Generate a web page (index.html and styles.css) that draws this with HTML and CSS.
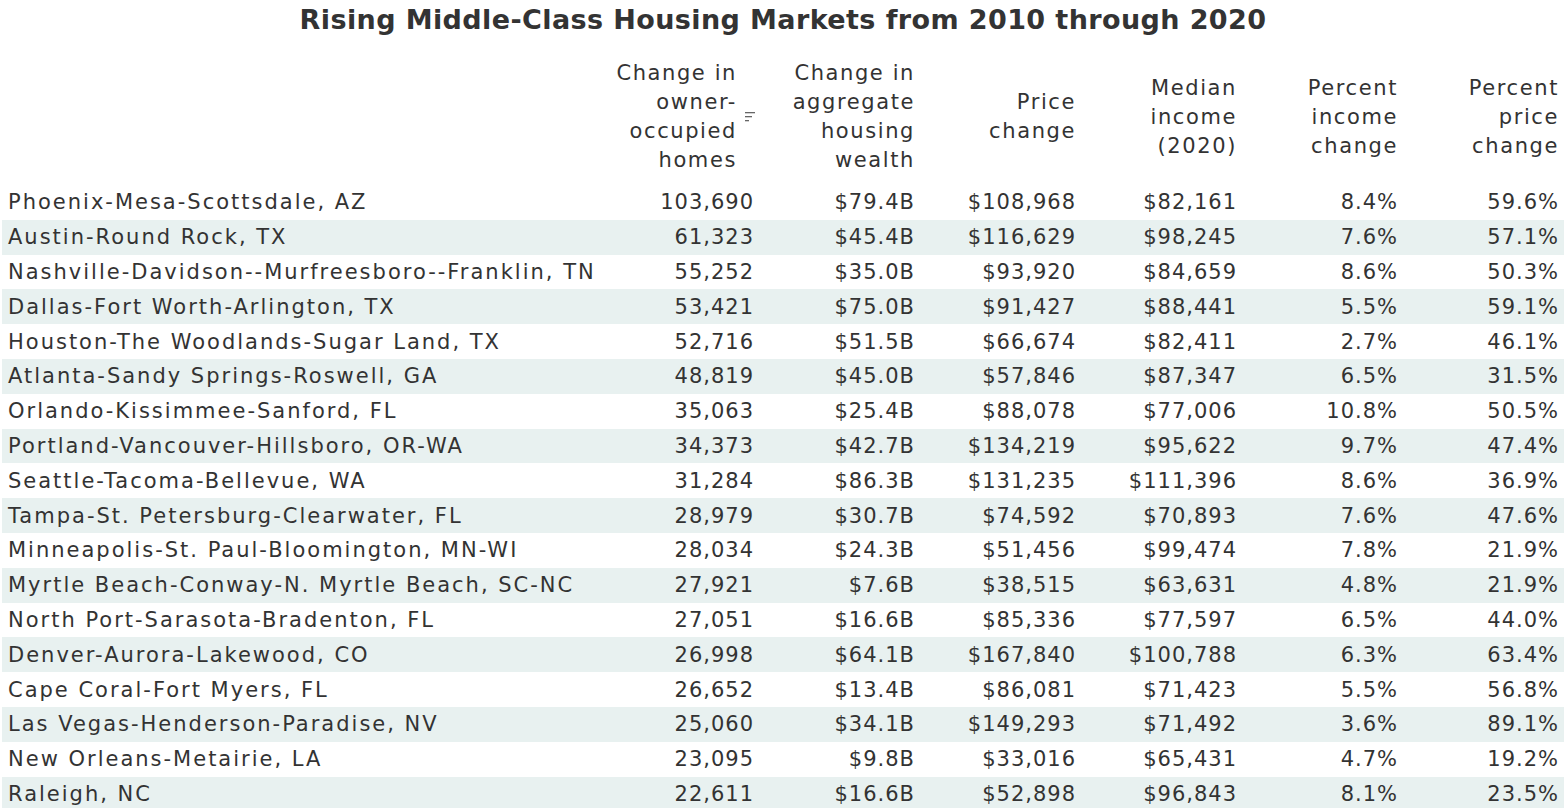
FILE: index.html
```html
<!DOCTYPE html>
<html lang="en">
<head>
<meta charset="utf-8">
<title>Rising Middle-Class Housing Markets</title>
<link rel="stylesheet" href="styles.css">
</head>
<body>
<h1 class="title">Rising Middle-Class Housing Markets from 2010 through 2020</h1>
<table class="data">
  <colgroup>
    <col class="c-name">
    <col class="c-num"><col class="c-num"><col class="c-num"><col class="c-num"><col class="c-num"><col class="c-num">
  </colgroup>
  <thead>
    <tr>
      <th class="h-name"></th>
      <th class="sorted">Change in<br>owner-<br>occupied<br>homes
        <svg class="sort-icon" width="11" height="10" viewBox="0 0 11 10" aria-hidden="true"><rect x="0" y="0" width="10" height="1.3" fill="#666"/><rect x="0" y="4" width="7" height="1.3" fill="#666"/><rect x="0" y="8" width="4" height="1.3" fill="#666"/></svg>
      </th>
      <th>Change in<br>aggregate<br>housing<br>wealth</th>
      <th>Price<br>change</th>
      <th>Median<br>income<br>(2020)</th>
      <th>Percent<br>income<br>change</th>
      <th>Percent<br>price<br>change</th>
    </tr>
  </thead>
  <tbody>
    <tr><td>Phoenix-Mesa-Scottsdale, AZ</td><td>103,690</td><td>$79.4B</td><td>$108,968</td><td>$82,161</td><td>8.4%</td><td>59.6%</td></tr>
    <tr><td>Austin-Round Rock, TX</td><td>61,323</td><td>$45.4B</td><td>$116,629</td><td>$98,245</td><td>7.6%</td><td>57.1%</td></tr>
    <tr><td>Nashville-Davidson--Murfreesboro--Franklin, TN</td><td>55,252</td><td>$35.0B</td><td>$93,920</td><td>$84,659</td><td>8.6%</td><td>50.3%</td></tr>
    <tr><td>Dallas-Fort Worth-Arlington, TX</td><td>53,421</td><td>$75.0B</td><td>$91,427</td><td>$88,441</td><td>5.5%</td><td>59.1%</td></tr>
    <tr><td>Houston-The Woodlands-Sugar Land, TX</td><td>52,716</td><td>$51.5B</td><td>$66,674</td><td>$82,411</td><td>2.7%</td><td>46.1%</td></tr>
    <tr><td>Atlanta-Sandy Springs-Roswell, GA</td><td>48,819</td><td>$45.0B</td><td>$57,846</td><td>$87,347</td><td>6.5%</td><td>31.5%</td></tr>
    <tr><td>Orlando-Kissimmee-Sanford, FL</td><td>35,063</td><td>$25.4B</td><td>$88,078</td><td>$77,006</td><td>10.8%</td><td>50.5%</td></tr>
    <tr><td>Portland-Vancouver-Hillsboro, OR-WA</td><td>34,373</td><td>$42.7B</td><td>$134,219</td><td>$95,622</td><td>9.7%</td><td>47.4%</td></tr>
    <tr><td>Seattle-Tacoma-Bellevue, WA</td><td>31,284</td><td>$86.3B</td><td>$131,235</td><td>$111,396</td><td>8.6%</td><td>36.9%</td></tr>
    <tr><td>Tampa-St. Petersburg-Clearwater, FL</td><td>28,979</td><td>$30.7B</td><td>$74,592</td><td>$70,893</td><td>7.6%</td><td>47.6%</td></tr>
    <tr><td>Minneapolis-St. Paul-Bloomington, MN-WI</td><td>28,034</td><td>$24.3B</td><td>$51,456</td><td>$99,474</td><td>7.8%</td><td>21.9%</td></tr>
    <tr><td>Myrtle Beach-Conway-N. Myrtle Beach, SC-NC</td><td>27,921</td><td>$7.6B</td><td>$38,515</td><td>$63,631</td><td>4.8%</td><td>21.9%</td></tr>
    <tr><td>North Port-Sarasota-Bradenton, FL</td><td>27,051</td><td>$16.6B</td><td>$85,336</td><td>$77,597</td><td>6.5%</td><td>44.0%</td></tr>
    <tr><td>Denver-Aurora-Lakewood, CO</td><td>26,998</td><td>$64.1B</td><td>$167,840</td><td>$100,788</td><td>6.3%</td><td>63.4%</td></tr>
    <tr><td>Cape Coral-Fort Myers, FL</td><td>26,652</td><td>$13.4B</td><td>$86,081</td><td>$71,423</td><td>5.5%</td><td>56.8%</td></tr>
    <tr><td>Las Vegas-Henderson-Paradise, NV</td><td>25,060</td><td>$34.1B</td><td>$149,293</td><td>$71,492</td><td>3.6%</td><td>89.1%</td></tr>
    <tr><td>New Orleans-Metairie, LA</td><td>23,095</td><td>$9.8B</td><td>$33,016</td><td>$65,431</td><td>4.7%</td><td>19.2%</td></tr>
    <tr><td>Raleigh, NC</td><td>22,611</td><td>$16.6B</td><td>$52,898</td><td>$96,843</td><td>8.1%</td><td>23.5%</td></tr>
  </tbody>
</table>
</body>
</html>
```

FILE: styles.css
```css
html, body {
  margin: 0;
  padding: 0;
  background: #ffffff;
}
body {
  padding-left: 2px;
  font-family: "DejaVu Sans", "Liberation Sans", sans-serif;
  color: #333333;
  overflow: hidden;
}
.title {
  margin: 0;
  height: 40px;
  line-height: 40px;
  font-size: 27px;
  font-weight: 700;
  text-align: center;
  letter-spacing: 0.4px;
}
.data {
  width: 1562px;
  border-collapse: collapse;
  table-layout: fixed;
  font-size: 21px;
  letter-spacing: 1px;
}
.c-num {
  width: 161px;
}
.data th {
  font-weight: normal;
  text-align: right;
  vertical-align: middle;
  line-height: 29px;
  padding: 19px 5px 10px 0;
  position: relative;
  letter-spacing: 1.6px;
}
.data th.sorted {
  padding-right: 22px;
}
.sort-icon {
  position: absolute;
  right: 3px;
  top: 72px;
}
.data td {
  height: 34.8px;
  padding: 0 5px 0 0;
  text-align: right;
  white-space: nowrap;
  box-sizing: border-box;
}
.data td:first-child {
  text-align: left;
  padding-left: 6px;
  letter-spacing: 2px;
}
.data tbody tr:nth-child(even) {
  background: #e8f1f0;
}
```
